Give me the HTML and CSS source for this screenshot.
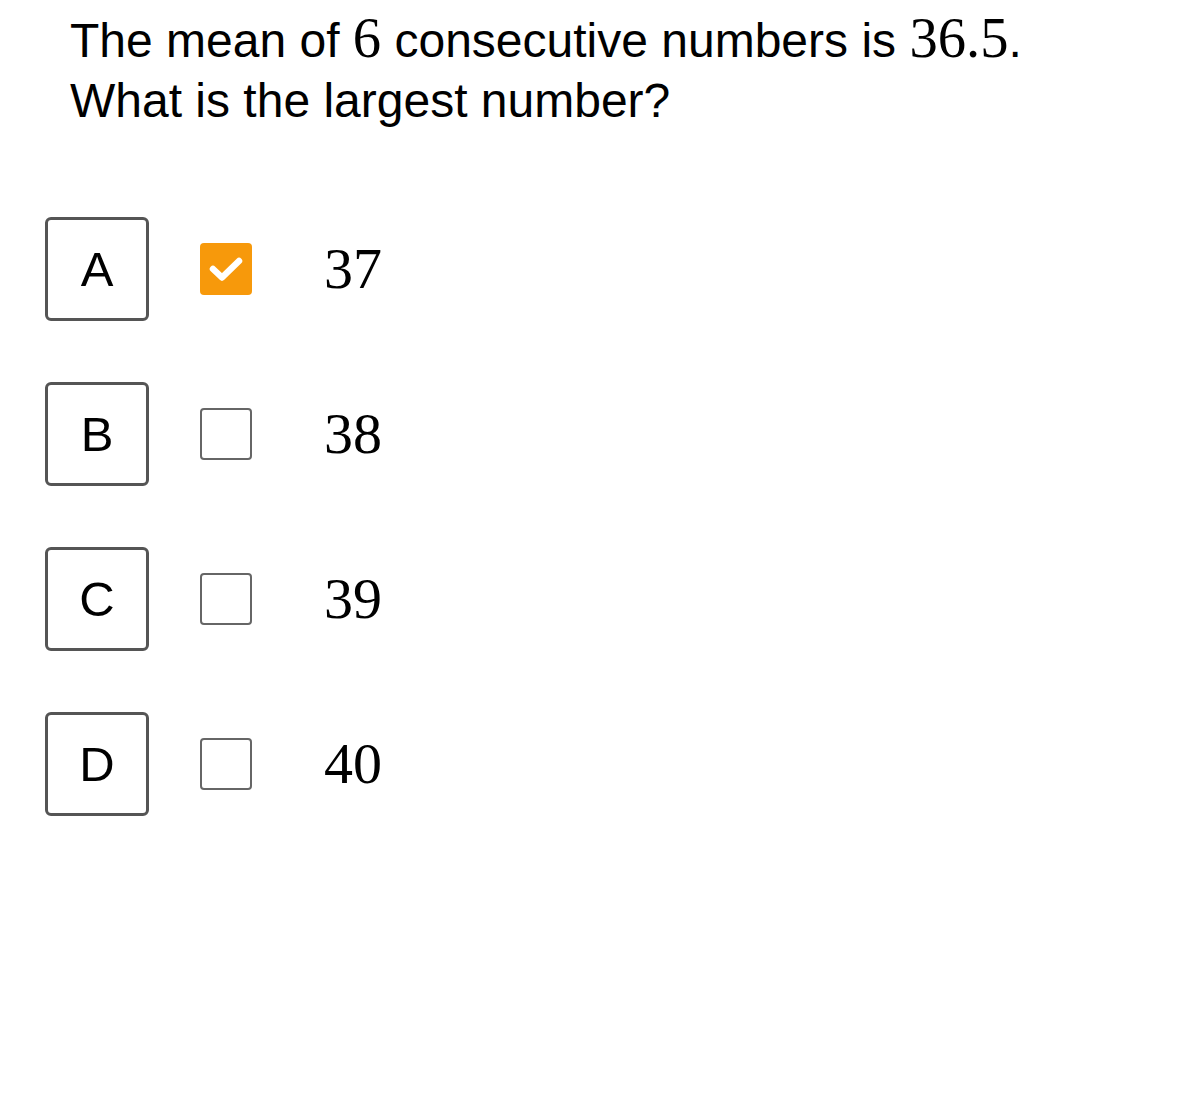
FILE: index.html
```html
<!DOCTYPE html>
<html lang="en">
<head>
<meta charset="utf-8">
<title>Question</title>
<link rel="stylesheet" href="styles.css">
</head>
<body>
<div class="question">
  <p class="prompt">The mean of <span class="math">6</span> consecutive numbers is <span class="math">36.5</span>.<br>What is the largest number?</p>
  <ul class="options">
    <li class="option">
      <span class="letter">A</span>
      <span class="check checked"><svg viewBox="0 0 52 52" width="52" height="52"><path d="M13 26 L22 34.5 L39 18" fill="none" stroke="#fff" stroke-width="6.5" stroke-linecap="round" stroke-linejoin="round"/></svg></span>
      <span class="value">37</span>
    </li>
    <li class="option">
      <span class="letter">B</span>
      <span class="check"></span>
      <span class="value">38</span>
    </li>
    <li class="option">
      <span class="letter">C</span>
      <span class="check"></span>
      <span class="value">39</span>
    </li>
    <li class="option">
      <span class="letter">D</span>
      <span class="check"></span>
      <span class="value">40</span>
    </li>
  </ul>
</div>
</body>
</html>
```
FILE: styles.css
```css
html, body {
  margin: 0;
  padding: 0;
  background: #fff;
}
body {
  font-family: "Liberation Sans", Arial, sans-serif;
  color: #000;
}
.question {
  padding: 10px 0 0 0;
}
.prompt {
  margin: 0;
  padding-left: 70px;
  font-size: 48px;
  line-height: 60px;
}
.math {
  font-family: "Liberation Serif", "Times New Roman", serif;
  font-size: 1.18em;
  line-height: 1;
}
.options {
  list-style: none;
  margin: 86px 0 0 0;
  padding: 0 0 0 45px;
  display: flex;
  flex-direction: column;
  gap: 61px;
}
.option {
  display: flex;
  align-items: center;
}
.letter {
  box-sizing: border-box;
  width: 104px;
  height: 104px;
  border: 3px solid #555;
  border-radius: 6px;
  display: flex;
  align-items: center;
  justify-content: center;
  font-size: 49px;
  line-height: 1;
}
.check {
  box-sizing: border-box;
  width: 52px;
  height: 52px;
  margin-left: 51px;
  border: 2px solid #666;
  border-radius: 4px;
  display: flex;
}
.check.checked {
  border: none;
  background: #f7990b;
}
.check svg {
  display: block;
}
.value {
  margin-left: 72px;
  font-family: "Liberation Serif", "Times New Roman", serif;
  font-size: 58px;
  line-height: 1;
}
```
